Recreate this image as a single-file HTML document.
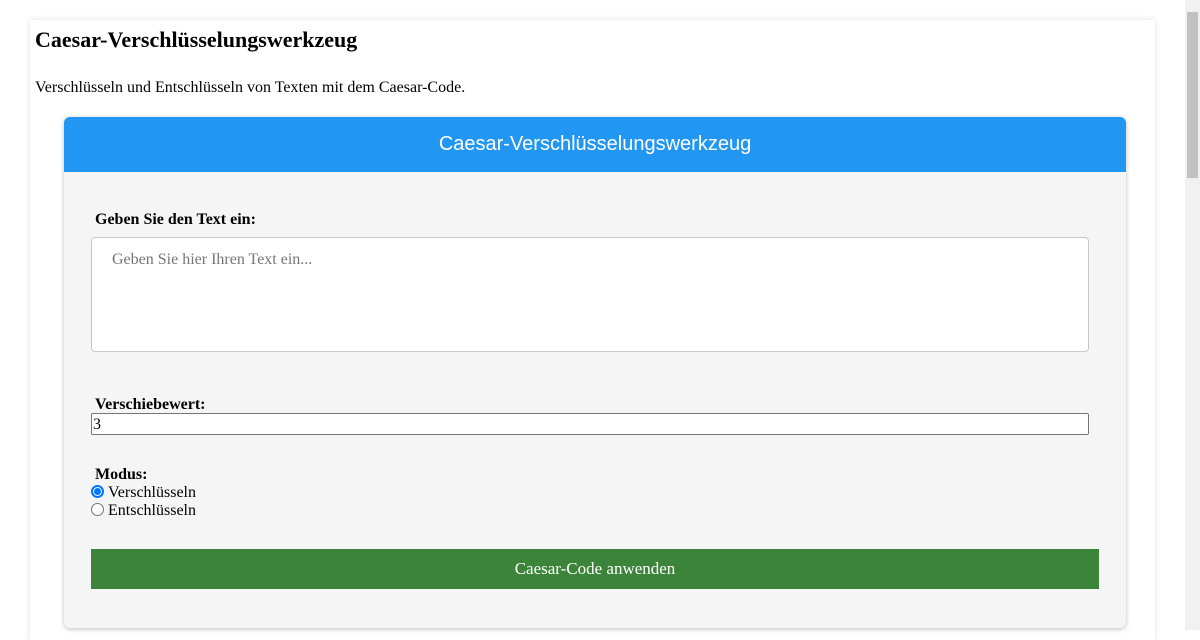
<!DOCTYPE html>
<html><head><meta charset="utf-8"><style>
*{box-sizing:border-box}
body{margin:0;width:1200px;height:630px;overflow:hidden;background:#fff;font-family:"Liberation Serif",serif;position:relative}
.wrap{position:absolute;left:30px;top:20px;width:1125px;height:620px;background:#fff;box-shadow:0 0 6px rgba(0,0,0,.12)}
h1{position:absolute;left:5px;top:7px;margin:0;font-size:22px;font-weight:bold;white-space:nowrap}
.sub{position:absolute;left:5px;top:59px;font-size:16px;white-space:nowrap}
.card{position:absolute;left:34px;top:97px;width:1062px;height:511px;background:#f5f5f5;border-radius:6px;box-shadow:0 1px 5px rgba(0,0,0,.25);overflow:hidden}
.hd{height:55px;background:#2196f3;color:#fff;font-family:"Liberation Sans",sans-serif;font-size:20px;text-align:center;line-height:54px}
.lbl{position:absolute;left:31px;font-weight:bold;font-size:16px;white-space:nowrap}
.ta{position:absolute;left:27px;top:120px;width:998px;height:115px;background:#fff;border:1px solid #c8c8c8;border-radius:4px;color:#777;font-size:16px;padding:13px 20px}
.in{position:absolute;left:27px;top:296px;width:998px;height:22px;background:#fff;border:1px solid #767676;border-radius:2px;font-size:16px;padding:0 1px;line-height:21px}
.r{position:absolute;left:27px;font-size:16px;white-space:nowrap}
.rd{display:inline-block;width:13px;height:13px;border-radius:50%;border:1px solid #767676;background:#fff;vertical-align:-1px;margin-right:4px;position:relative}
.rd.on{border:2px solid #0075ff}
.rd.on:after{content:"";position:absolute;left:1px;top:1px;width:7px;height:7px;border-radius:50%;background:#0075ff}
.btn{position:absolute;left:27px;top:432px;width:1008px;height:40px;background:#3b8439;color:#fff;font-size:17px;text-align:center;line-height:39px}
.sb{position:absolute;left:1185px;top:0;width:15px;height:630px;background:#f1f1f1}
.th{position:absolute;left:2px;top:12px;width:11px;height:166px;background:#c1c1c1}
</style></head><body>
<div class="wrap">
<h1>Caesar-Verschlüsselungswerkzeug</h1>
<div class="sub">Verschlüsseln und Entschlüsseln von Texten mit dem Caesar-Code.</div>
<div class="card">
<div class="hd">Caesar-Verschlüsselungswerkzeug</div>
<div class="lbl" style="top:94px">Geben Sie den Text ein:</div>
<div class="ta">Geben Sie hier Ihren Text ein...</div>
<div class="lbl" style="top:279px">Verschiebewert:</div>
<div class="in">3</div>
<div class="lbl" style="top:349px">Modus:</div>
<div class="r" style="top:367px"><span class="rd on"></span>Verschlüsseln</div>
<div class="r" style="top:385px"><span class="rd"></span>Entschlüsseln</div>
<div class="btn">Caesar-Code anwenden</div>
</div>
</div>
<div class="sb"><div class="th"></div></div>
</body></html>
